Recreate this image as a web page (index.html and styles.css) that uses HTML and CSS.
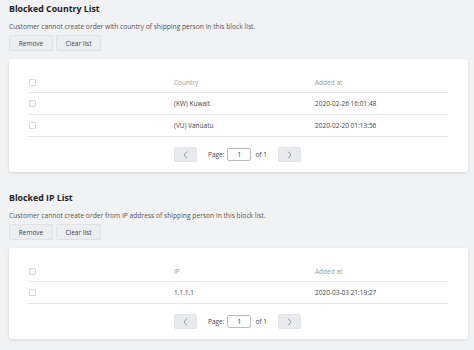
FILE: index.html
```html
<!DOCTYPE html>
<html lang="en">
<head>
    <meta charset="UTF-8">
    <meta name="viewport" content="width=device-width, initial-scale=1.0">
    <title>Block lists</title>
    <link rel="stylesheet" href="styles.css">
</head>
<body>

    <section class="block">
        <h2>Blocked Country List</h2>
        <p class="hint">Customer cannot create order with country of shipping person in this block list.</p>
        <div class="actions">
            <button type="button" class="btn btn-remove">Remove</button>
            <button type="button" class="btn btn-clear">Clear list</button>
        </div>
        <div class="card">
            <div class="list">
                <div class="row head">
                    <span class="check"></span>
                    <span>Country</span>
                    <span>Added at</span>
                </div>
                <div class="row">
                    <span class="check"></span>
                    <span>(KW) Kuwait</span>
                    <span>2020-02-26 16:01:48</span>
                </div>
                <div class="row">
                    <span class="check"></span>
                    <span>(VU) Vanuatu</span>
                    <span>2020-02-20 01:13:56</span>
                </div>
            </div>
            <div class="pager">
                <button type="button" class="page-btn prev">
                    <svg width="5" height="8" viewBox="0 0 5 8"><polyline points="4,0.5 1,4 4,7.5" fill="none" stroke="#8a8f96" stroke-width="0.9"/></svg>
                </button>
                <span class="page-label">Page:</span>
                <input class="page-input" type="text" value="1">
                <span class="page-total">of 1</span>
                <button type="button" class="page-btn next">
                    <svg width="5" height="8" viewBox="0 0 5 8"><polyline points="1,0.5 4,4 1,7.5" fill="none" stroke="#8a8f96" stroke-width="0.9"/></svg>
                </button>
            </div>
        </div>
    </section>

    <section class="block">
        <h2>Blocked IP List</h2>
        <p class="hint">Customer cannot create order from IP address of shipping person in this block list.</p>
        <div class="actions">
            <button type="button" class="btn btn-remove">Remove</button>
            <button type="button" class="btn btn-clear">Clear list</button>
        </div>
        <div class="card">
            <div class="list">
                <div class="row head">
                    <span class="check"></span>
                    <span>IP</span>
                    <span>Added at</span>
                </div>
                <div class="row">
                    <span class="check"></span>
                    <span>1.1.1.1</span>
                    <span>2020-03-03 21:19:27</span>
                </div>
            </div>
            <div class="pager">
                <button type="button" class="page-btn prev">
                    <svg width="5" height="8" viewBox="0 0 5 8"><polyline points="4,0.5 1,4 4,7.5" fill="none" stroke="#8a8f96" stroke-width="0.9"/></svg>
                </button>
                <span class="page-label">Page:</span>
                <input class="page-input" type="text" value="1">
                <span class="page-total">of 1</span>
                <button type="button" class="page-btn next">
                    <svg width="5" height="8" viewBox="0 0 5 8"><polyline points="1,0.5 4,4 1,7.5" fill="none" stroke="#8a8f96" stroke-width="0.9"/></svg>
                </button>
            </div>
        </div>
    </section>

</body>
</html>
```

FILE: styles.css
```css
body {
    font-family: "Open Sans", "Noto Sans", Arial, sans-serif;
    margin: 0;
    padding: 0 6px 0 9px;
    background-color: #f1f2f4;
    color: #333;
}
.block {
    padding-top: 2px;
    margin-bottom: 17px;
}
h2 {
    margin: 0;
    font-size: 8.8px;
    line-height: 15px;
    font-weight: 700;
    color: #222;
}
.hint {
    margin: 5px 0 0;
    font-size: 6.7px;
    line-height: 10px;
    color: #555;
}
.actions {
    display: flex;
    gap: 3px;
    margin-top: 3px;
}
.btn {
    height: 16px;
    padding: 0;
    font-family: inherit;
    font-size: 6.5px;
    color: #444;
    background-color: #eceef1;
    border: 1px solid #dfe2e6;
    border-radius: 2px;
}
.btn-remove {
    width: 44px;
}
.btn-clear {
    width: 45px;
}
.card {
    margin-top: 8px;
    padding: 14px 20px 10px 18px;
    background-color: #fff;
    border-radius: 3px;
    box-shadow: 0 1px 3px rgba(0,0,0,0.12);
}
.row {
    display: grid;
    grid-template-columns: 147px 141px 1fr;
    align-items: center;
    height: 22px;
    box-sizing: border-box;
    border-bottom: 1px solid #e8e9eb;
    font-size: 6.5px;
    color: #444;
}
.row.head {
    height: 20px;
    color: #979ca3;
}
.check {
    width: 7px;
    height: 7px;
    margin-left: 2px;
    border: 1px solid #d6d8db;
    border-radius: 1px;
    box-sizing: border-box;
    background-color: #fff;
}
.pager {
    display: flex;
    justify-content: center;
    align-items: center;
    margin-top: 10px;
    height: 15px;
    font-size: 6.5px;
    color: #444;
}
.page-btn {
    display: flex;
    align-items: center;
    justify-content: center;
    width: 23px;
    height: 15px;
    padding: 0;
    background-color: #e8eaee;
    border: 1px solid #e1e4e8;
    border-radius: 2px;
}
.page-label {
    margin-left: 11px;
}
.page-input {
    width: 24px;
    height: 13px;
    margin-left: 3px;
    padding: 0;
    box-sizing: border-box;
    text-align: center;
    font-family: inherit;
    font-size: 6.5px;
    color: #333;
    border: 1px solid #b9bdc3;
    border-radius: 2px;
}
.page-total {
    margin-left: 4px;
    margin-right: 11px;
}
```
